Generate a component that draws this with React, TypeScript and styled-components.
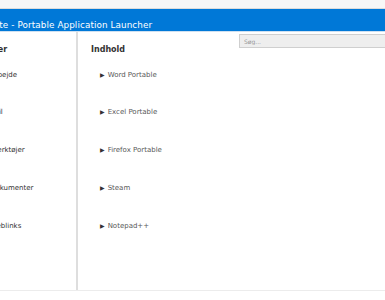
import styled, { createGlobalStyle } from 'styled-components'

const GlobalStyle = createGlobalStyle`
    html, body {
        margin: 0;
        padding: 0;
        background: #fff;
        overflow: hidden;
    }
    body {
        font-family: "DejaVu Sans", "Liberation Sans", sans-serif;
    }
`

const Page = styled.div`
    width: calc(100% + 120px);
    margin-left: -60px;
    height: 300px;
    display: flex;
    flex-direction: column;
`

const TopStrip = styled.div`
    height: 8px;
    background: #f7f7f7;
    border-bottom: 1px solid #dcdcdc;
`

const TitleBar = styled.div`
    height: 23px;
    background: #0078d7;
    border-bottom: 1px solid #cfe0f0;
    color: #fff;
    font-size: 8.8px;
    padding: 11px 0 0 25px;
    box-sizing: border-box;
    letter-spacing: 0.1px;
`

const Main = styled.div`
    display: flex;
    height: 258px;
    border-bottom: 1px solid #ececec;
`

const Sidebar = styled.div`
    width: 136px;
    border-right: 2px solid #dedede;
    display: flex;
    flex-direction: column;
`

const Content = styled.div`
    flex: 1;
    display: flex;
    flex-direction: column;
`

const ContentHead = styled.div`
    display: flex;
    justify-content: space-between;
    align-items: flex-start;
`

const Heading = styled.h3<{ indent: number }>`
    margin: 0;
    padding: 13px 0 0 ${props => props.indent}px;
    font-size: 8px;
    font-weight: bold;
    color: #333;
    height: 26px;
    box-sizing: border-box;
`

const Search = styled.input`
    width: 206px;
    height: 14px;
    margin-top: 2px;
    box-sizing: border-box;
    border: 1px solid #cfcfcf;
    background: #eeeeee;
    font-family: "DejaVu Sans", sans-serif;
    font-size: 6px;
    color: #888;
    padding: 0 4px;
    outline: none;

    &::placeholder {
        color: #999;
    }
`

const List = styled.div`
    display: flex;
    flex-direction: column;
    padding-top: 11.5px;
`

const Item = styled.div<{ indent: number; muted: boolean }>`
    height: 37.75px;
    padding-left: ${props => props.indent}px;
    font-size: 7px;
    color: ${props => props.muted ? "#595959" : "#333"};
    line-height: 10px;
`

const Arrow = styled.span`
    font-size: 6px;
    color: #333;
    margin-right: 3px;
`

const categories = ["Arbejde", "Spil", "Værktøjer", "Dokumenter", "Weblinks"]
const apps = ["Word Portable", "Excel Portable", "Firefox Portable", "Steam", "Notepad++"]

export default function App() {
    return (
        <>
            <GlobalStyle />
            <Page>
                <TopStrip />
                <TitleBar>App Suite - Portable Application Launcher</TitleBar>
                <Main>
                    <Sidebar>
                        <Heading indent={19}>Kategorier</Heading>
                        <List>
                            {categories.map(c => (
                                <Item key={c} indent={50} muted={false}>{c}</Item>
                            ))}
                        </List>
                    </Sidebar>
                    <Content>
                        <ContentHead>
                            <Heading indent={13}>Indhold</Heading>
                            <Search placeholder="Søg..." />
                        </ContentHead>
                        <List>
                            {apps.map(a => (
                                <Item key={a} indent={22} muted={true}><Arrow>▶</Arrow>{a}</Item>
                            ))}
                        </List>
                    </Content>
                </Main>
            </Page>
        </>
    )
}
